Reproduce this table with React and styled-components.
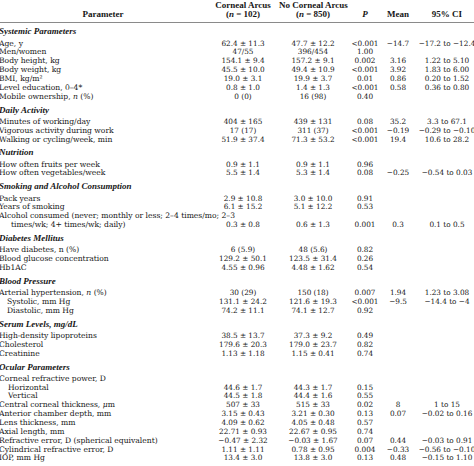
import styled, { createGlobalStyle } from "styled-components";

const GlobalStyle = createGlobalStyle`
  html, body {
    margin: 0;
    padding: 0;
    background: #fff;
    overflow: hidden;
  }
`;

const Page = styled.div`
  width: 474px;
  height: 466px;
  overflow: hidden;
  font-family: "DejaVu Serif", "Liberation Serif", serif;
  color: #161616;
`;

const Table = styled.table`
  table-layout: fixed;
  border-collapse: collapse;
  width: 482px;
  margin: 1px 0 0 -1px;
`;

const HeadCell = styled.th`
  font-family: "Liberation Serif", "Times New Roman", serif;
  font-size: 9px;
  font-weight: bold;
  line-height: 9.4px;
  vertical-align: bottom;
  text-align: center;
  white-space: nowrap;
  padding: 0 0 2.5px;
  border-bottom: 1px solid #8a8a8a;
`;

const SectionCell = styled.td`
  height: 16.3px;
  padding: 0;
  font-family: "Liberation Serif", "Times New Roman", serif;
  font-size: 9px;
  font-weight: bold;
  font-style: italic;
  line-height: 10px;
  white-space: nowrap;
  vertical-align: middle;
`;

const Label = styled.td`
  height: 8.85px;
  font-size: 7.6px;
  line-height: 8.85px;
  padding: 0 0 0 ${(p) => p.$indent || 0}px;
  white-space: nowrap;
  overflow: visible;
`;

const Value = styled.td`
  font-size: 7.3px;
  line-height: 8.85px;
  padding: 0;
  text-align: center;
  white-space: nowrap;
`;

const I = styled.i`
  font-style: italic;
`;

const sections = [
  {
    title: "Systemic Parameters",
    rows: [
      ["Age, y", "62.4 ± 11.3", "47.7 ± 12.2", "<0.001", "−14.7", "−17.2 to −12.4"],
      ["Men/women", "47/55", "396/454", "1.00"],
      ["Body height, kg", "154.1 ± 9.4", "157.2 ± 9.1", "0.002", "3.16", "1.22 to 5.10"],
      ["Body weight, kg", "45.5 ± 10.0", "49.4 ± 10.9", "<0.001", "3.92", "1.83 to 6.00"],
      ["BMI, kg/m²", "19.0 ± 3.1", "19.9 ± 3.7", "0.01", "0.86", "0.20 to 1.52"],
      ["Level education, 0–4*", "0.8 ± 1.0", "1.4 ± 1.3", "<0.001", "0.58", "0.36 to 0.80"],
      [<>Mobile ownership, <I>n</I> (%)</>, "0 (0)", "16 (98)", "0.40"],
    ],
  },
  {
    title: "Daily Activity",
    rows: [
      ["Minutes of working/day", "404 ± 165", "439 ± 131", "0.08", "35.2", "3.3 to 67.1"],
      ["Vigorous activity during work", "17 (17)", "311 (37)", "<0.001", "−0.19", "−0.29 to −0.10"],
      ["Walking or cycling/week, min", "51.9 ± 37.4", "71.3 ± 53.2", "<0.001", "19.4", "10.6 to 28.2"],
    ],
  },
  {
    title: "Nutrition",
    rows: [
      ["How often fruits per week", "0.9 ± 1.1", "0.9 ± 1.1", "0.96"],
      ["How often vegetables/week", "5.5 ± 1.4", "5.3 ± 1.4", "0.08", "−0.25", "−0.54 to 0.03"],
    ],
  },
  {
    title: "Smoking and Alcohol Consumption",
    rows: [
      ["Pack years", "2.9 ± 10.8", "3.0 ± 10.0", "0.91"],
      ["Years of smoking", "6.1 ± 15.2", "5.1 ± 12.2", "0.53"],
      ["Alcohol consumed (never; monthly or less; 2–4 times/mo; 2–3"],
      [{ indent: 12, text: "times/wk; 4+ times/wk; daily)" }, "0.3 ± 0.8", "0.6 ± 1.3", "0.001", "0.3", "0.1 to 0.5"],
    ],
  },
  {
    title: "Diabetes Mellitus",
    rows: [
      ["Have diabetes, n (%)", "6 (5.9)", "48 (5.6)", "0.82"],
      ["Blood glucose concentration", "129.2 ± 50.1", "123.5 ± 31.4", "0.26"],
      ["Hb1AC", "4.55 ± 0.96", "4.48 ± 1.62", "0.54"],
    ],
  },
  {
    title: "Blood Pressure",
    rows: [
      [<>Arterial hypertension, <I>n</I> (%)</>, "30 (29)", "150 (18)", "0.007", "1.94", "1.23 to 3.08"],
      [{ indent: 8, text: "Systolic, mm Hg" }, "131.1 ± 24.2", "121.6 ± 19.3", "<0.001", "−9.5", "−14.4 to −4"],
      [{ indent: 8, text: "Diastolic, mm Hg" }, "74.2 ± 11.1", "74.1 ± 12.7", "0.92"],
    ],
  },
  {
    title: "Serum Levels, mg/dL",
    rows: [
      ["High-density lipoproteins", "38.5 ± 13.7", "37.3 ± 9.2", "0.49"],
      ["Cholesterol", "179.6 ± 20.3", "179.0 ± 23.7", "0.82"],
      ["Creatinine", "1.13 ± 1.18", "1.15 ± 0.41", "0.74"],
    ],
  },
  {
    title: "Ocular Parameters",
    rows: [
      ["Corneal refractive power, D"],
      [{ indent: 9, text: "Horizontal" }, "44.6 ± 1.7", "44.3 ± 1.7", "0.15"],
      [{ indent: 9, text: "Vertical" }, "44.5 ± 1.8", "44.4 ± 1.6", "0.55"],
      [<>Central corneal thickness, <I>μ</I>m</>, "507 ± 33", "515 ± 33", "0.02", "8", "1 to 15"],
      ["Anterior chamber depth, mm", "3.15 ± 0.43", "3.21 ± 0.30", "0.13", "0.07", "−0.02 to 0.16"],
      ["Lens thickness, mm", "4.09 ± 0.62", "4.05 ± 0.48", "0.57"],
      ["Axial length, mm", "22.71 ± 0.93", "22.67 ± 0.95", "0.74"],
      ["Refractive error, D (spherical equivalent)", "−0.47 ± 2.32", "−0.03 ± 1.67", "0.07", "0.44", "−0.03 to 0.91"],
      ["Cylindrical refractive error, D", "1.11 ± 1.11", "0.78 ± 0.95", "0.004", "−0.33", "−0.56 to −0.10"],
      ["IOP, mm Hg", "13.4 ± 3.0", "13.8 ± 3.0", "0.13", "0.48", "−0.15 to 1.10"],
    ],
  },
];

const widths = [208, 72, 68, 36, 30, 68];

function DataRow({ row }) {
  const [label, ...values] = row;
  const isObj = label && typeof label === "object" && "text" in label;
  return (
    <tr>
      <Label $indent={isObj ? label.indent : 0}>{isObj ? label.text : label}</Label>
      {[0, 1, 2, 3, 4].map((i) => (
        <Value key={i}>{values[i] || ""}</Value>
      ))}
    </tr>
  );
}

export default function App() {
  return (
    <Page>
      <GlobalStyle />
      <Table>
        <colgroup>
          {widths.map((w, i) => (
            <col key={i} style={{ width: w }} />
          ))}
        </colgroup>
        <thead>
          <tr>
            <HeadCell>Parameter</HeadCell>
            <HeadCell>
              Corneal Arcus
              <br />(<I>n</I> = 102)
            </HeadCell>
            <HeadCell>
              No Corneal Arcus
              <br />(<I>n</I> = 850)
            </HeadCell>
            <HeadCell>
              <I>P</I>
            </HeadCell>
            <HeadCell>Mean</HeadCell>
            <HeadCell>95% CI</HeadCell>
          </tr>
        </thead>
        <tbody>
          {sections.map((s) => [
            <tr key={s.title}>
              <SectionCell colSpan={6}>{s.title}</SectionCell>
            </tr>,
            ...s.rows.map((r, i) => <DataRow key={s.title + i} row={r} />),
          ])}
        </tbody>
      </Table>
    </Page>
  );
}
